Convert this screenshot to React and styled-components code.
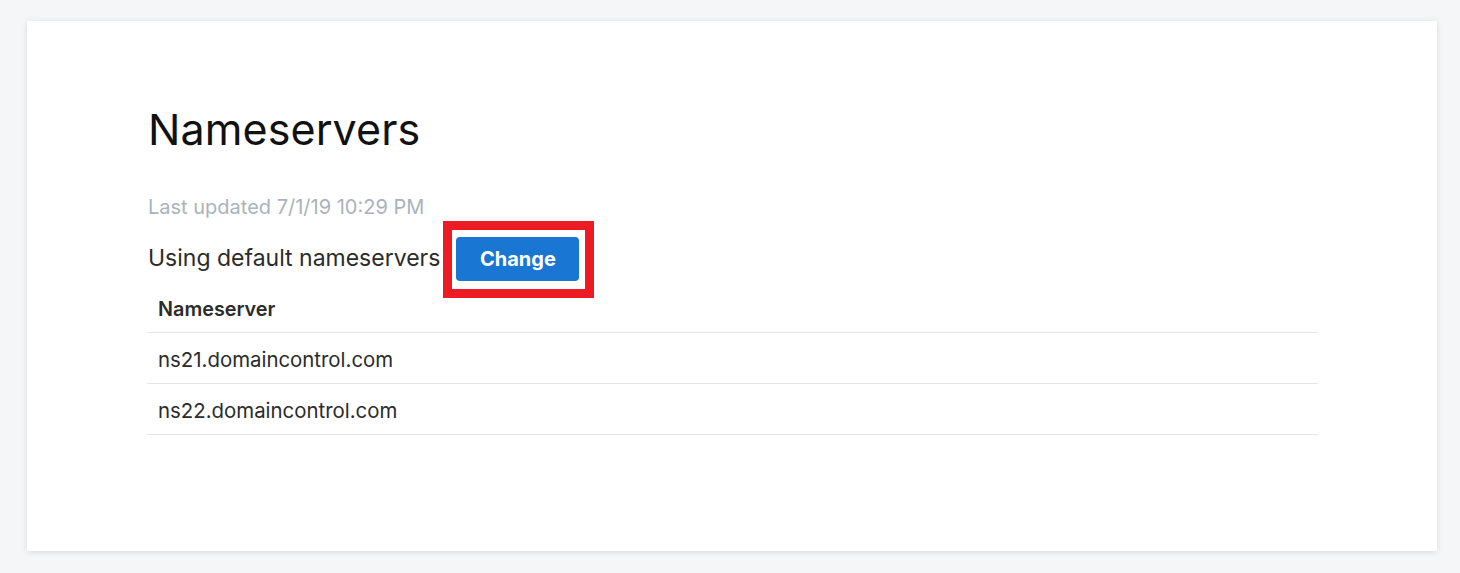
import React from 'react';
import styled, { createGlobalStyle } from 'styled-components';

const GlobalStyle = createGlobalStyle`
    html, body {
        margin: 0;
        padding: 0;
        background: #f5f6f8;
    }

    body {
        font-family: Inter, "Noto Sans", sans-serif;
        color: #2b2b2b;
    }
`;

const Page = styled.div`
    padding: 21px 23px 22px 27px;
`;

const Card = styled.section`
    box-sizing: border-box;
    width: 1410px;
    height: 530px;
    padding: 0 119px 0 120px;
    background: #fff;
    box-shadow: 0 1px 6px rgba(0, 0, 0, 0.12);
`;

const Content = styled.div`
    padding-top: 82px;
`;

const Title = styled.h1`
    margin: 0 0 0 1px;
    font-size: 43px;
    font-weight: 400;
    line-height: 52px;
    color: #111;
    letter-spacing: 0.1px;
`;

const Updated = styled.p`
    margin: 40px 0 0 1px;
    font-size: 20px;
    line-height: 24px;
    color: #a9b3bd;
`;

const Status = styled.div`
    display: flex;
    align-items: center;
    margin: 18px 0 0 1px;
    font-size: 23px;
    line-height: 28px;
`;

const Label = styled.span`
    position: relative;
    top: -1px;
`;

const ButtonWrap = styled.div`
    position: relative;
    margin-left: 16px;
`;

const Button = styled.button`
    display: block;
    width: 123px;
    height: 44px;
    border: 0;
    border-radius: 4px;
    background: #1976d2;
    color: #fff;
    font-family: inherit;
    font-size: 20px;
    font-weight: 700;
    cursor: pointer;
`;

const Highlight = styled.span`
    position: absolute;
    left: -13px;
    top: -16px;
    width: 151px;
    height: 77px;
    box-sizing: border-box;
    border: 9px solid #ed1c24;
    pointer-events: none;
`;

const Table = styled.div`
    margin-top: 1px;
    width: 1171px;
`;

const Row = styled.div`
    box-sizing: border-box;
    display: flex;
    align-items: center;
    height: 51px;
    padding: 3px 0 0 11px;
    border-bottom: 1px solid #e6e6e6;
    font-size: ${({ $head }) => ($head ? '19.8px' : '20.4px')};
    font-weight: ${({ $head }) => ($head ? 600 : 400)};
    color: #2b2b2b;
`;

const nameservers = ['ns21.domaincontrol.com', 'ns22.domaincontrol.com'];

export default function App() {
    return (
        <>
            <GlobalStyle />
            <Page>
                <Card>
                    <Content>
                        <Title>Nameservers</Title>
                        <Updated>Last updated 7/1/19 10:29 PM</Updated>
                        <Status>
                            <Label>Using default nameservers</Label>
                            <ButtonWrap>
                                <Button type="button">Change</Button>
                                <Highlight />
                            </ButtonWrap>
                        </Status>
                        <Table>
                            <Row $head>Nameserver</Row>
                            {nameservers.map((ns) => (
                                <Row key={ns}>{ns}</Row>
                            ))}
                        </Table>
                    </Content>
                </Card>
            </Page>
        </>
    );
}
